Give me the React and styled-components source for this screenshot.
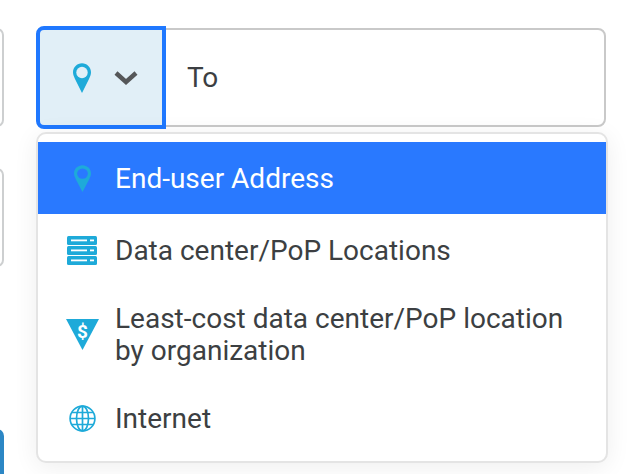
import React from "react"
import styled, { createGlobalStyle } from "styled-components"

const GlobalStyle = createGlobalStyle`
  html, body {
    margin: 0;
    padding: 0;
    background: #fff;
    font-family: Roboto, "Liberation Sans", sans-serif;
  }
`

const Page = styled.div`
  display: flex;
  height: 474px;
  width: 634px;
  overflow: hidden;
`

const SideColumn = styled.div`
  flex: 0 0 36px;
  width: 36px;
  overflow: hidden;
  display: flex;
  flex-direction: column;
  padding-top: 28px;
  box-sizing: border-box;
`

const SideField = styled.div`
  width: 100px;
  height: 99px;
  margin-left: -96px;
  margin-bottom: 41px;
  box-sizing: border-box;
  border: 2px solid #cdcfd0;
  border-radius: 7px;
  flex: none;
`

const SideButton = styled.div`
  width: 100px;
  height: 60px;
  margin-top: 121px;
  margin-left: -96px;
  background: #2c87c5;
  border-radius: 7px;
  flex: none;
`

const Column = styled.div`
  flex: 0 0 572px;
  width: 572px;
  display: flex;
  flex-direction: column;
  padding-top: 28px;
`

const Select = styled.div`
  display: flex;
  height: 99px;
  width: 568px;
  margin-left: 2px;
  box-sizing: border-box;
  border: 2px solid #c9c9c9;
  border-radius: 8px;
  background: #fff;
`

const Trigger = styled.div`
  flex: none;
  width: 130px;
  margin: -4px 0 -4px -4px;
  box-sizing: border-box;
  border: 4px solid #1f78ff;
  border-radius: 8px 0 0 8px;
  background: #e1eff7;
  display: flex;
  align-items: center;
  padding-left: 33px;
  gap: 23px;
`

const Input = styled.div`
  flex: 1;
  display: flex;
  align-items: center;
  padding-left: 21px;
  font-size: 28px;
  color: #3c3f42;
`

const Menu = styled.div`
  margin-top: 5px;
  width: 572px;
  box-sizing: border-box;
  padding: 8px 0 7px;
  border: 2px solid #e4e4e4;
  border-radius: 10px;
  background: #fff;
  box-shadow: 0 4px 24px rgba(0, 0, 0, 0.07);
`

const Item = styled.div`
  display: flex;
  align-items: center;
  height: ${(p) => p.$height}px;
  padding: 0 30px 0 26px;
  gap: 15px;
  background: ${(p) => (p.$active ? "#2979ff" : "transparent")};
  color: ${(p) => (p.$active ? "#fff" : "#3c3f42")};
  font-size: 28px;
  line-height: 32px;
`

const IconSlot = styled.span`
  flex: none;
  width: 36px;
  display: flex;
  justify-content: center;
  align-items: center;
`

const Label = styled.span`
  padding-top: 2px;
`

const Pin = ({ width = 17, height = 27, hole = "#fff", color = "#1eaad9" }) => (
  <svg width={width} height={height} viewBox="0 0 18 30" preserveAspectRatio="none">
    <path
      fill={color}
      d="M9 .3C4 .3 0 4.3 0 9.3c0 2.5 1 4.6 2 6.7L9 30l7-14c1-2.1 2-4.2 2-6.7C18 4.3 14 .3 9 .3z"
    />
    <circle cx="9" cy="9.5" r="5.7" fill={hole} />
  </svg>
)

const Chevron = () => (
  <svg width="24" height="14" viewBox="0 0 24 14">
    <path d="M2 2l10 9L22 2" fill="none" stroke="#555759" strokeWidth="4.4" />
  </svg>
)

const ServerIcon = () => (
  <svg width="30" height="29" viewBox="0 0 30 29">
    {[0, 10, 20].map((y) => (
      <g key={y}>
        <rect x="0" y={y} width="30" height="9" rx="1.5" fill="#1eaad9" />
        <rect x="4" y={y + 3.5} width="16" height="1.8" fill="#fff" />
        <rect x="23" y={y + 3.5} width="4" height="1.8" fill="#fff" />
      </g>
    ))}
  </svg>
)

const CostIcon = () => (
  <svg width="33" height="31" viewBox="0 0 33 31">
    <path d="M0 0h33L16.5 31z" fill="#1eaad9" />
    <text x="16.5" y="19" textAnchor="middle" fontSize="19" fontWeight="700" fill="#fff" fontFamily="Roboto, sans-serif">$</text>
  </svg>
)

const GlobeIcon = () => (
  <svg width="27" height="27" viewBox="0 0 27 27" fill="none" stroke="#1eaad9" strokeWidth="1.7">
    <circle cx="13.5" cy="13.5" r="12.4" />
    <ellipse cx="13.5" cy="13.5" rx="6" ry="12.4" />
    <path d="M13.5 1.1v24.8M1.1 13.5h24.8M3 7.5h21M3 19.5h21" />
  </svg>
)

const options = [
  { label: "End-user Address", height: 72, icon: <Pin hole="#2979ff" />, active: true },
  { label: "Data center/PoP Locations", height: 72, icon: <ServerIcon /> },
  { label: "Least-cost data center/PoP location by organization", height: 96, icon: <CostIcon /> },
  { label: "Internet", height: 72, icon: <GlobeIcon /> },
]

const App = () => {
  return (
    <Page>
      <GlobalStyle />
      <SideColumn>
        <SideField />
        <SideField />
        <SideButton />
      </SideColumn>
      <Column>
        <Select>
          <Trigger>
            <Pin width={18} height={30} hole="#e1eff7" />
            <Chevron />
          </Trigger>
          <Input>To</Input>
        </Select>
        <Menu>
          {options.map((option) => (
            <Item key={option.label} $height={option.height} $active={option.active}>
              <IconSlot>{option.icon}</IconSlot>
              <Label>{option.label}</Label>
            </Item>
          ))}
        </Menu>
      </Column>
    </Page>
  )
}

export default App
